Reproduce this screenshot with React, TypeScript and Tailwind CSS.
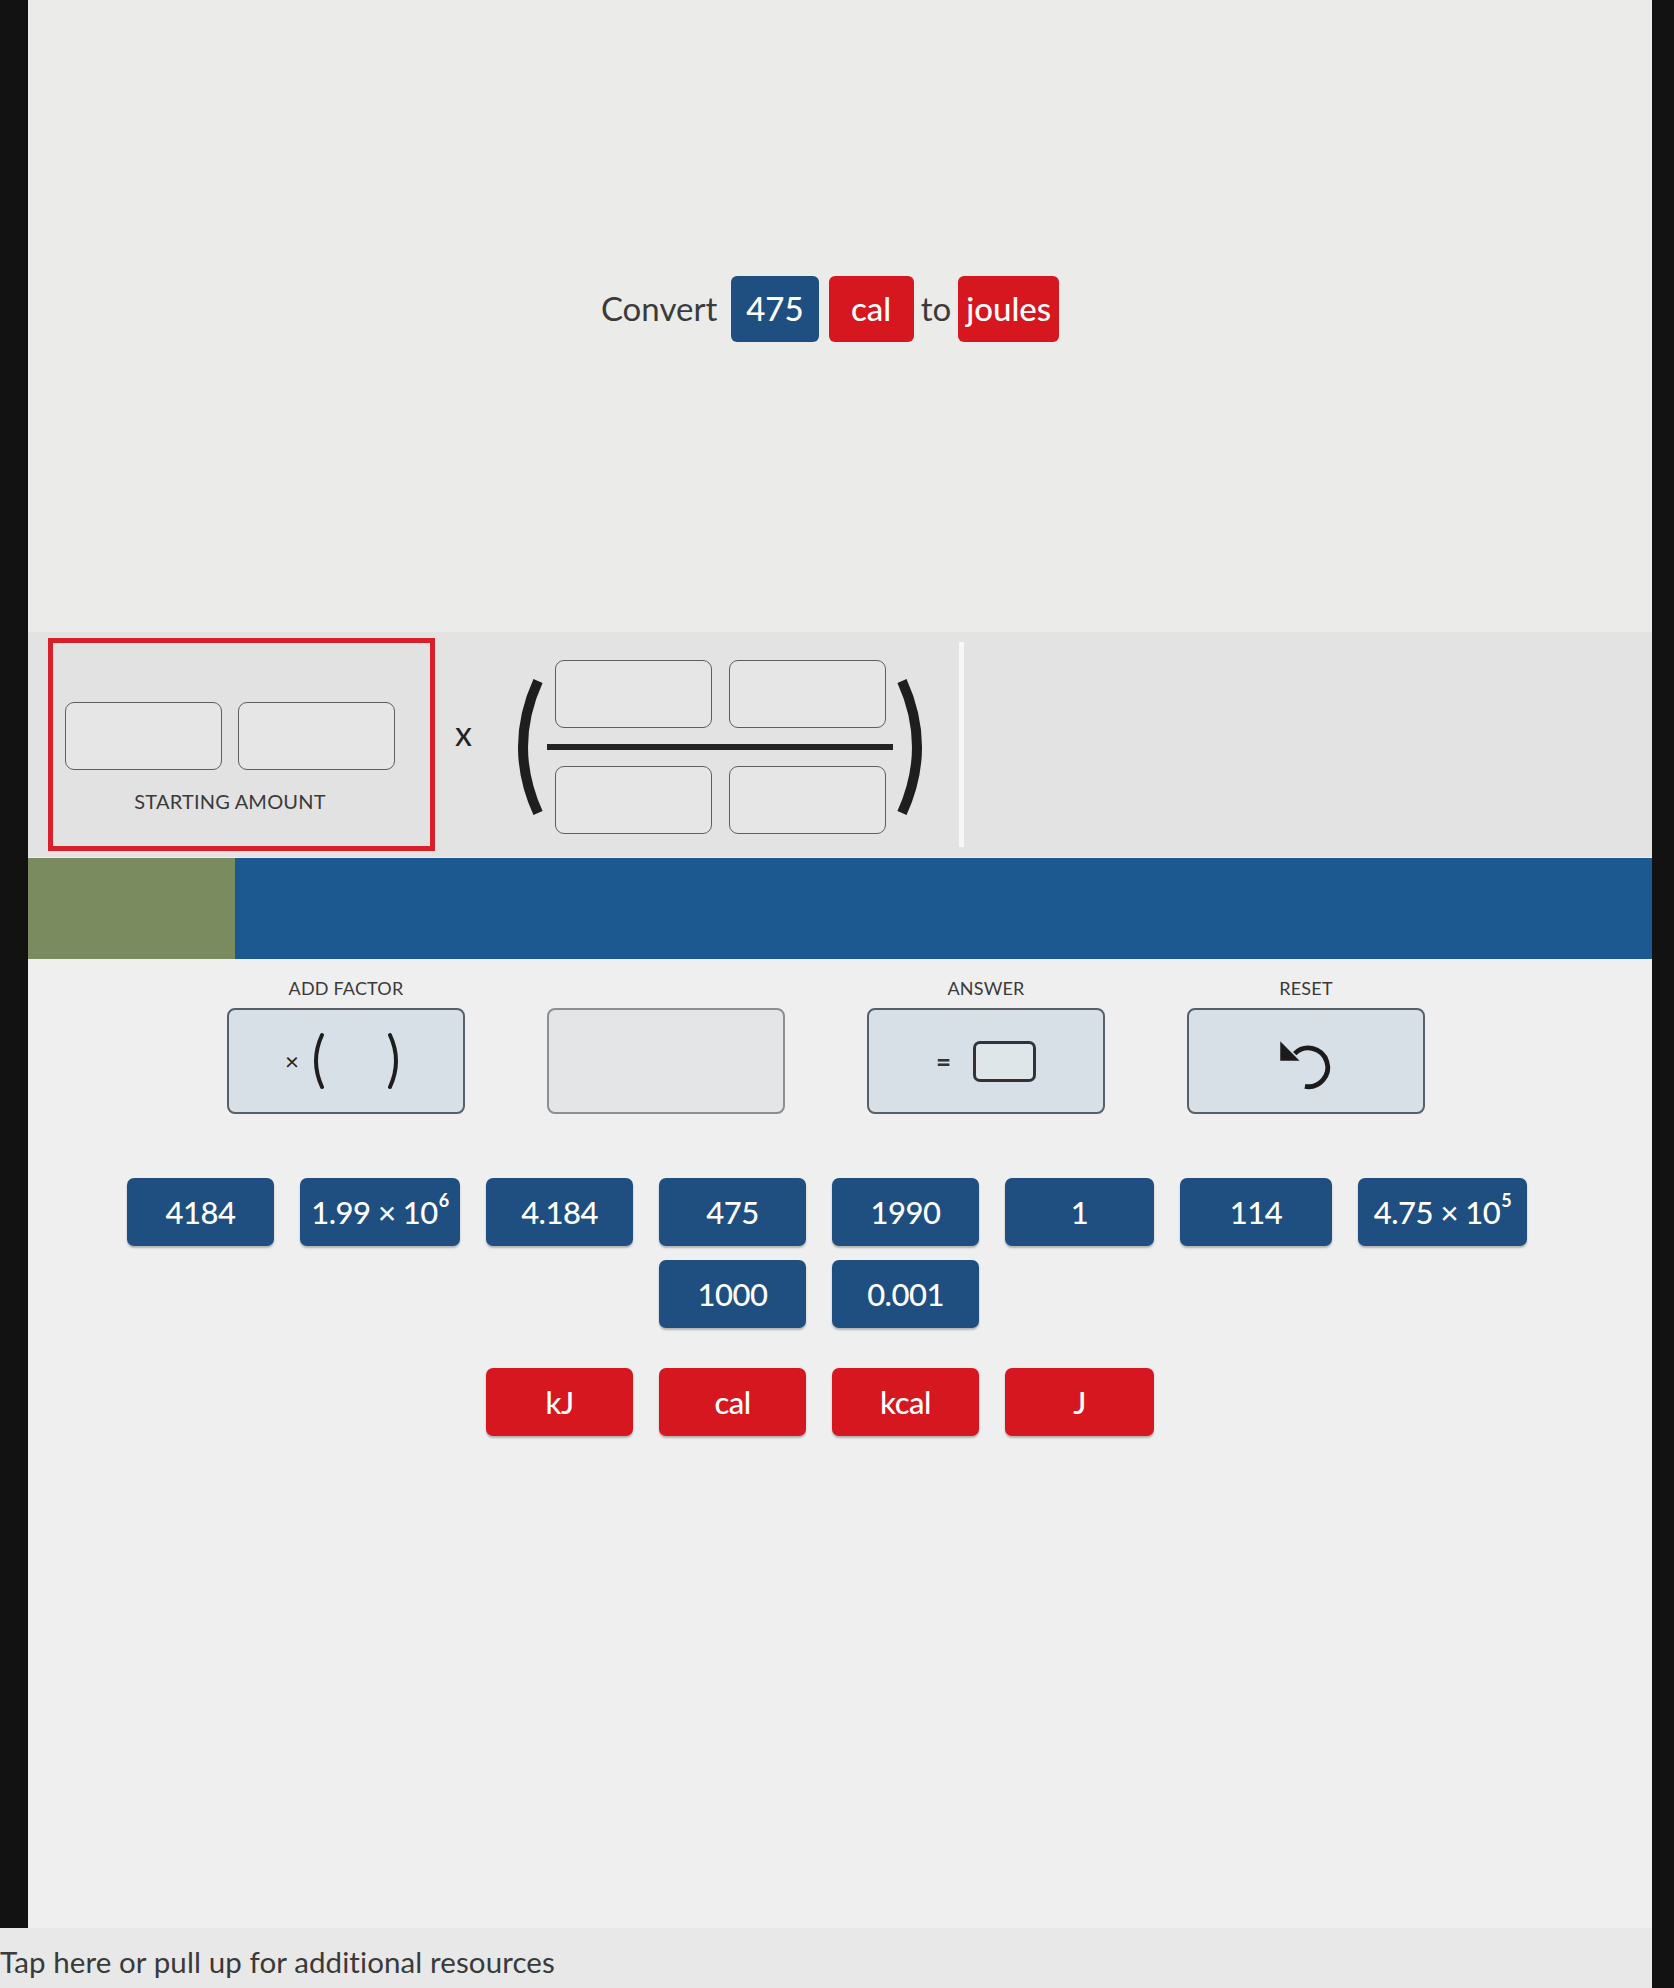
import React from "react";

const FONT = { fontFamily: "Lato, 'Open Sans', 'Liberation Sans', sans-serif" };

function Slot({ className = "" }: { className?: string }) {
  return <div className={"w-[157px] h-[68px] rounded-[9px] border-[1.5px] border-[#5e5e5e] bg-[#e6e6e6] " + className} />;
}

function BigParen({ flip = false }: { flip?: boolean }) {
  return (
    <svg width="38" height="140" viewBox="0 0 38 140" className={flip ? "-scale-x-100" : ""}>
      <path d="M33 4 Q3 70 33 136" fill="none" stroke="#1e1e1e" strokeWidth="10" strokeLinecap="butt" />
    </svg>
  );
}

function SmallParen({ flip = false }: { flip?: boolean }) {
  return (
    <svg width="16" height="58" viewBox="0 0 16 58" className={flip ? "-scale-x-100" : ""}>
      <path d="M13 3 Q1 29 13 55" fill="none" stroke="#1e1e1e" strokeWidth="4" strokeLinecap="round" />
    </svg>
  );
}

function Tile({ children, red = false, w = "w-[147px]", col }: { children: React.ReactNode; red?: boolean; w?: string; col: string }) {
  return (
    <div
      className={
        `${col} ${w} h-[68px] rounded-[7px] flex items-center justify-center text-white text-[31px] font-medium tracking-[-0.5px] shadow-[0_2px_2px_rgba(0,0,0,0.25)] ` +
        (red ? "bg-[#d7171f]" : "bg-[#1f4f80]")
      }
    >
      {children}
    </div>
  );
}

function Sci({ base, exp }: { base: string; exp: string }) {
  return (
    <span className="flex items-start">
      <span>{base} × 10</span>
      <span className="text-[18px] leading-none mt-[2px] ml-[1px] font-bold">{exp}</span>
    </span>
  );
}

function ActionBox({ children, label }: { children?: React.ReactNode; label?: string }) {
  return (
    <div className="flex flex-col items-center w-[238px]">
      <div className="h-[22px] mb-[9px] text-[18px] leading-[22px] text-[#3a3a3a] tracking-[0.2px]">{label ?? ""}</div>
      <div
        className={
          "w-[238px] h-[106px] rounded-[8px] border-2 flex items-center justify-center " +
          (children ? "bg-[#d7e0e6] border-[#56606a]" : "bg-[#e3e5e7] border-[#8a8f94]")
        }
      >
        {children}
      </div>
    </div>
  );
}

export default function App() {
  return (
    <div className="flex w-[1674px] h-[1988px] bg-[#0f0f10]" style={FONT}>
      <div className="w-[28px] shrink-0 bg-[#121213]" />
      <div className="w-[1624px] flex flex-col bg-[#efefef]">
        {/* Top prompt */}
        <div className="h-[632px] bg-[#ebebea] flex justify-center pt-[276px] pr-[20px]">
          <div className="flex items-center h-[66px] gap-[10px] text-[33px] text-[#3b3b3b]">
            <span className="mr-[4px]">Convert</span>
            <span className="h-[66px] px-[15px] rounded-[6px] bg-[#1f4f80] text-white flex items-center font-medium">475</span>
            <span className="h-[66px] w-[85px] rounded-[6px] bg-[#d7171f] text-white flex items-center justify-center font-medium">cal</span>
            <span className="ml-[-3px] mr-[-3px]">to</span>
            <span className="h-[66px] px-[8px] rounded-[6px] bg-[#d7171f] text-white flex items-center font-medium">joules</span>
          </div>
        </div>

        {/* Equation band */}
        <div className="h-[225px] bg-[#e3e3e3] flex items-center pl-[20px]">
          <div className="w-[387px] h-[213px] border-[5px] border-[#d8202a] bg-[#e2e2e2] flex flex-col items-start pt-[59px] pl-[12px]">
            <div className="flex flex-col items-center">
              <div className="flex gap-[16px]">
                <Slot />
                <Slot />
              </div>
              <div className="mt-[16px] text-[20px] text-[#3a3a3a] tracking-[0.2px]">STARTING AMOUNT</div>
            </div>
          </div>
          <div className="ml-[20px] text-[34px] text-[#222] w-[22px] mt-[-24px]">x</div>
          <div className="ml-[28px] flex items-center mt-[4px]">
            <BigParen />
            <div className="flex flex-col items-center mx-[4px]">
              <div className="flex gap-[17px]">
                <Slot />
                <Slot />
              </div>
              <div className="w-[346px] h-[6px] bg-[#232323] my-[16px]" />
              <div className="flex gap-[17px]">
                <Slot />
                <Slot />
              </div>
            </div>
            <BigParen flip />
          </div>
          <div className="ml-[24px] w-[5px] h-[205px] bg-[#f7f7f7]" />
        </div>

        {/* Colored bar */}
        <div className="h-[101px] mt-[1px] flex">
          <div className="w-[207px] bg-[#7a8b60]" />
          <div className="flex-1 bg-[#1c5990]" />
        </div>

        {/* Actions */}
        <div className="flex pl-[199px] gap-[82px] mt-[18px]">
          <ActionBox label="ADD FACTOR">
            <div className="flex items-center gap-[12px] ml-[-4px]">
              <span className="text-[24px] text-[#222] mr-[-2px]">×</span>
              <SmallParen />
              <div className="w-[38px]" />
              <SmallParen flip />
            </div>
          </ActionBox>
          <ActionBox />
          <ActionBox label="ANSWER">
            <div className="flex items-center gap-[22px]">
              <span className="text-[26px] font-bold text-[#333]">=</span>
              <div className="w-[63px] h-[41px] rounded-[7px] border-[3px] border-[#333] bg-[#dfe6ea]" />
            </div>
          </ActionBox>
          <ActionBox label="RESET">
            <svg width="58" height="58" viewBox="0 0 54 54" className="mt-[10px]">
              <path d="M16.5 15.5 A18 18 0 1 1 26 46" fill="none" stroke="#1b1b1b" strokeWidth="4.5" />
              <polygon points="3,4 3,22 21,22" fill="#1b1b1b" />
            </svg>
          </ActionBox>
        </div>

        {/* Number tiles */}
        <div className="mt-[64px] pl-[99px] grid grid-cols-[147px_160px_147px_147px_147px_149px_152px_169px] gap-x-[26px] gap-y-[14px]">
          <Tile col="col-start-1">4184</Tile>
          <Tile col="col-start-2" w="w-[160px]">
            <Sci base="1.99" exp="6" />
          </Tile>
          <Tile col="col-start-3">4.184</Tile>
          <Tile col="col-start-4">475</Tile>
          <Tile col="col-start-5">1990</Tile>
          <Tile col="col-start-6" w="w-[149px]">1</Tile>
          <Tile col="col-start-7" w="w-[152px]">114</Tile>
          <Tile col="col-start-8" w="w-[169px]">
            <Sci base="4.75" exp="5" />
          </Tile>
          <Tile col="col-start-4">1000</Tile>
          <Tile col="col-start-5">0.001</Tile>
        </div>

        <div className="mt-[40px] pl-[99px] grid grid-cols-[147px_160px_147px_147px_147px_149px_152px_169px] gap-x-[26px]">
          <Tile col="col-start-3" red>kJ</Tile>
          <Tile col="col-start-4" red>cal</Tile>
          <Tile col="col-start-5" red>kcal</Tile>
          <Tile col="col-start-6" red w="w-[149px]">J</Tile>
        </div>

        <div className="flex-1" />
        <div className="h-[60px] bg-[#e8e8e8] flex items-start pt-[12px] ml-[-28px]">
          <span className="text-[29.5px] text-[#3a3a3a] tracking-[0.1px]">Tap here or pull up for additional resources</span>
        </div>
      </div>
      <div className="w-[22px] shrink-0 bg-[#121213]" />
    </div>
  );
}
